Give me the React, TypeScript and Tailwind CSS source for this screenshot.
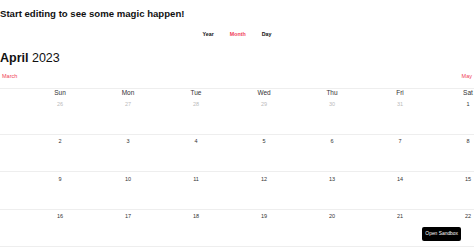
import React from "react";

const dayNames = ["Sun", "Mon", "Tue", "Wed", "Thu", "Fri", "Sat"];

const weeks: { day: number; inMonth: boolean }[][] = [
    [26, 27, 28, 29, 30, 31].map((d) => ({ day: d, inMonth: false })).concat([{ day: 1, inMonth: true }]),
    [2, 3, 4, 5, 6, 7, 8].map((d) => ({ day: d, inMonth: true })),
    [9, 10, 11, 12, 13, 14, 15].map((d) => ({ day: d, inMonth: true })),
    [16, 17, 18, 19, 20, 21, 22].map((d) => ({ day: d, inMonth: true })),
];

const App: React.FC = () => {
    return (
        <div className="relative w-[474px] h-[248px] overflow-hidden bg-white text-[#111] font-['Liberation_Sans',Arial,sans-serif]">
            <h1 className="pt-[8px] text-[9.6px] leading-[12px] font-bold">Start editing to see some magic happen!</h1>

            {/* view switcher */}
            <div className="mt-[9px] flex justify-center text-[5.3px] leading-[10px] font-bold">
                <button className="px-2">Year</button>
                <button className="px-2 text-[#ef3e56]">Month</button>
                <button className="px-2">Day</button>
            </div>

            <div className="mt-[11px] text-[12.5px] leading-[16px]">
                <span className="font-bold">April</span> 2023
            </div>

            <div className="mt-[6px] flex justify-between text-[5.5px] leading-[8px] text-[#ef3e56]">
                <span className="pl-[2px]">March</span>
                <span className="pr-[2px]">May</span>
            </div>

            {/* calendar grid */}
            <div className="mt-[8px] w-[476px] border-t border-[#eee]">
                <div className="grid grid-cols-7 h-[8px] text-[6.5px] leading-[8px] text-[#333]">
                    {dayNames.map((name) => (
                        <div key={name} className="flex justify-end">
                            <span className="w-4 text-center">{name}</span>
                        </div>
                    ))}
                </div>
                {weeks.map((week, i) => (
                    <div key={i} className="grid grid-cols-7 h-[37.5px] border-b border-[#eee] text-[5.5px] leading-[8px]">
                        {week.map((cell, j) => (
                            <div key={j} className="flex justify-end pt-[2.5px]">
                                <span className={cell.inMonth ? "w-4 text-center text-[#333]" : "w-4 text-center text-[#bbb]"}>
                                    {cell.day}
                                </span>
                            </div>
                        ))}
                    </div>
                ))}
            </div>

            <button className="absolute right-[13px] bottom-[7px] h-[14px] px-[3px] rounded-[2px] bg-black text-white text-[4.9px] leading-[14px]">
                Open Sandbox
            </button>
        </div>
    );
};

export default App;
